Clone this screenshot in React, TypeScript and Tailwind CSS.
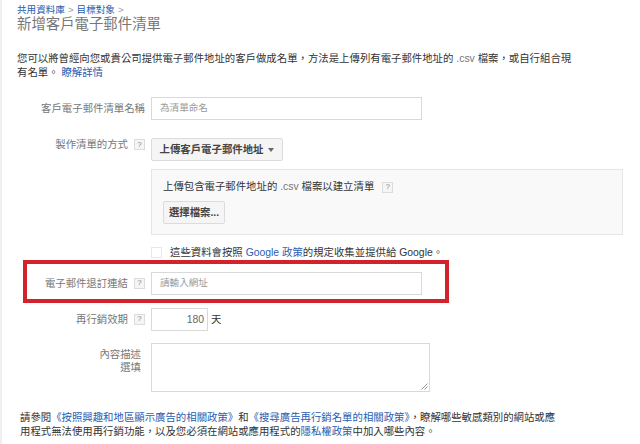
const font = { fontFamily: '"Liberation Sans", "Noto Sans CJK TC", sans-serif' };

function Help() {
  return (
    <span className="flex h-[11px] w-[11px] shrink-0 items-center justify-center border border-[#dcdcdc] bg-[#f5f5f5] text-[8px] leading-none text-[#888]">
      ?
    </span>
  );
}

function Label({ text, help }: { text: string; help?: boolean }) {
  return (
    <div className="flex w-[143px] shrink-0 items-center justify-end gap-[6px] text-[10.4px] text-[#777]">
      <span className="whitespace-nowrap">{text}</span>
      {help && <Help />}
    </div>
  );
}

function Input({ placeholder }: { placeholder: string }) {
  return (
    <div className="flex h-[23px] w-[271px] items-center border border-[#d9d9d9] bg-white px-[8px] text-[9.6px] text-[#999]">
      {placeholder}
    </div>
  );
}

export default function App() {
  return (
    <div style={font} className="relative h-[444px] w-[640px] overflow-hidden border-l-2 border-[#f0f0f0] bg-white text-[#333]">
      <div className="px-[15px] pt-[4px]">
        <div className="flex h-[12px] items-center gap-[3px] text-[9.6px] leading-none text-[#999]">
          <a className="text-[#2a5db0]">共用資料庫</a>
          <span>&gt;</span>
          <a className="text-[#2a5db0]">目標對象</a>
          <span>&gt;</span>
        </div>
        <h1 className="text-[14.4px] leading-[16px] font-normal text-[#777]">新增客戶電子郵件清單</h1>
        <p className="mt-[20px] w-[560px] text-[10.4px] leading-[14px] text-[#333]">
          您可以將曾經向您或貴公司提供電子郵件地址的客戶做成名單，方法是上傳列有電子郵件地址的 <span className="text-[#777]">.csv</span> 檔案，或自行組合現有名單。 <a className="text-[#2a5db0]">瞭解詳情</a>
        </p>
      </div>

      <div className="mt-[17px] flex flex-col">
        <div className="flex items-center gap-[6px]">
          <Label text="客戶電子郵件清單名稱" />
          <Input placeholder="為清單命名" />
        </div>

        <div className="mt-[18px] flex items-start gap-[6px]">
          <div className="flex h-[13px] items-center"><Label text="製作清單的方式" help /></div>
          <div className="flex h-[23px] w-[132px] items-center justify-center gap-[5px] rounded-[2px] border border-[#dcdcdc] bg-[#f5f5f5] text-[10.4px] font-bold text-[#444]">
            上傳客戶電子郵件地址
            <span className="h-0 w-0 border-x-[3px] border-t-[4px] border-x-transparent border-t-[#666]" />
          </div>
        </div>

        <div className="mt-[8px] ml-[149px] h-[66px] w-[472px] border border-[#e5e5e5] bg-[#f9f9f9] px-[11px] pt-[10px]">
          <div className="flex items-center gap-[8px] text-[10.4px] leading-[14px] text-[#333]">
            <span>上傳包含電子郵件地址的 <span className="text-[#777]">.csv</span> 檔案以建立清單</span>
            <Help />
          </div>
          <div className="mt-[7px] flex h-[23px] w-[62px] items-center justify-center rounded-[2px] border border-[#dcdcdc] bg-[#f5f5f5] text-[10.4px] font-bold text-[#444]">
            選擇檔案...
          </div>
        </div>

        <div className="mt-[11px] ml-[149px] flex h-[13px] items-center gap-[8px] text-[10.4px] text-[#333]">
          <span className="h-[11px] w-[11px] border border-[#e8e8e8] bg-white" />
          <span className="whitespace-nowrap">這些資料會按照 <a className="text-[#2a5db0]">Google 政策</a>的規定收集並提供給 Google。</span>
        </div>

        <div className="relative mt-[13px] flex items-center gap-[6px]">
          <Label text="電子郵件退訂連結" help />
          <Input placeholder="請輸入網址" />
          <div className="absolute top-[-12px] left-[21px] h-[43px] w-[426px] border-4 border-[#d2232a]" />
        </div>

        <div className="mt-[13px] flex items-center gap-[6px]">
          <Label text="再行銷效期" help />
          <div className="flex h-[23px] w-[57px] items-center justify-end border border-[#d9d9d9] px-[3px] text-[10.4px] text-[#666]">180</div>
          <span className="-ml-[3px] text-[10.4px] text-[#333]">天</span>
        </div>

        <div className="mt-[12px] flex items-start gap-[10px]">
          <div className="w-[139px] shrink-0 pt-[5px] text-right text-[10.4px] leading-[13px] text-[#777]">
            內容描述
            <br />
            選填
          </div>
          <div className="relative h-[49px] w-[279px] border border-[#d9d9d9] bg-white">
            <svg className="absolute right-[1px] bottom-[1px]" width="7" height="7" viewBox="0 0 7 7" stroke="#777" strokeWidth="0.8">
              <path d="M0.5 6.5 L6.5 0.5 M3.5 6.5 L6.5 3.5" />
            </svg>
          </div>
        </div>

        <p className="mt-[19px] ml-[18px] w-[545px] text-[10.4px] leading-[14px] text-[#333]">
          請參閱<a className="text-[#2a5db0]">《按照興趣和地區顯示廣告的相關政策》</a>和<a className="text-[#2a5db0]">《搜尋廣告再行銷名單的相關政策》</a>，瞭解哪些敏感類別的網站或應用程式無法使用再行銷功能，以及您必須在網站或應用程式的<a className="text-[#2a5db0]">隱私權政策</a>中加入哪些內容。
        </p>
      </div>
    </div>
  );
}
